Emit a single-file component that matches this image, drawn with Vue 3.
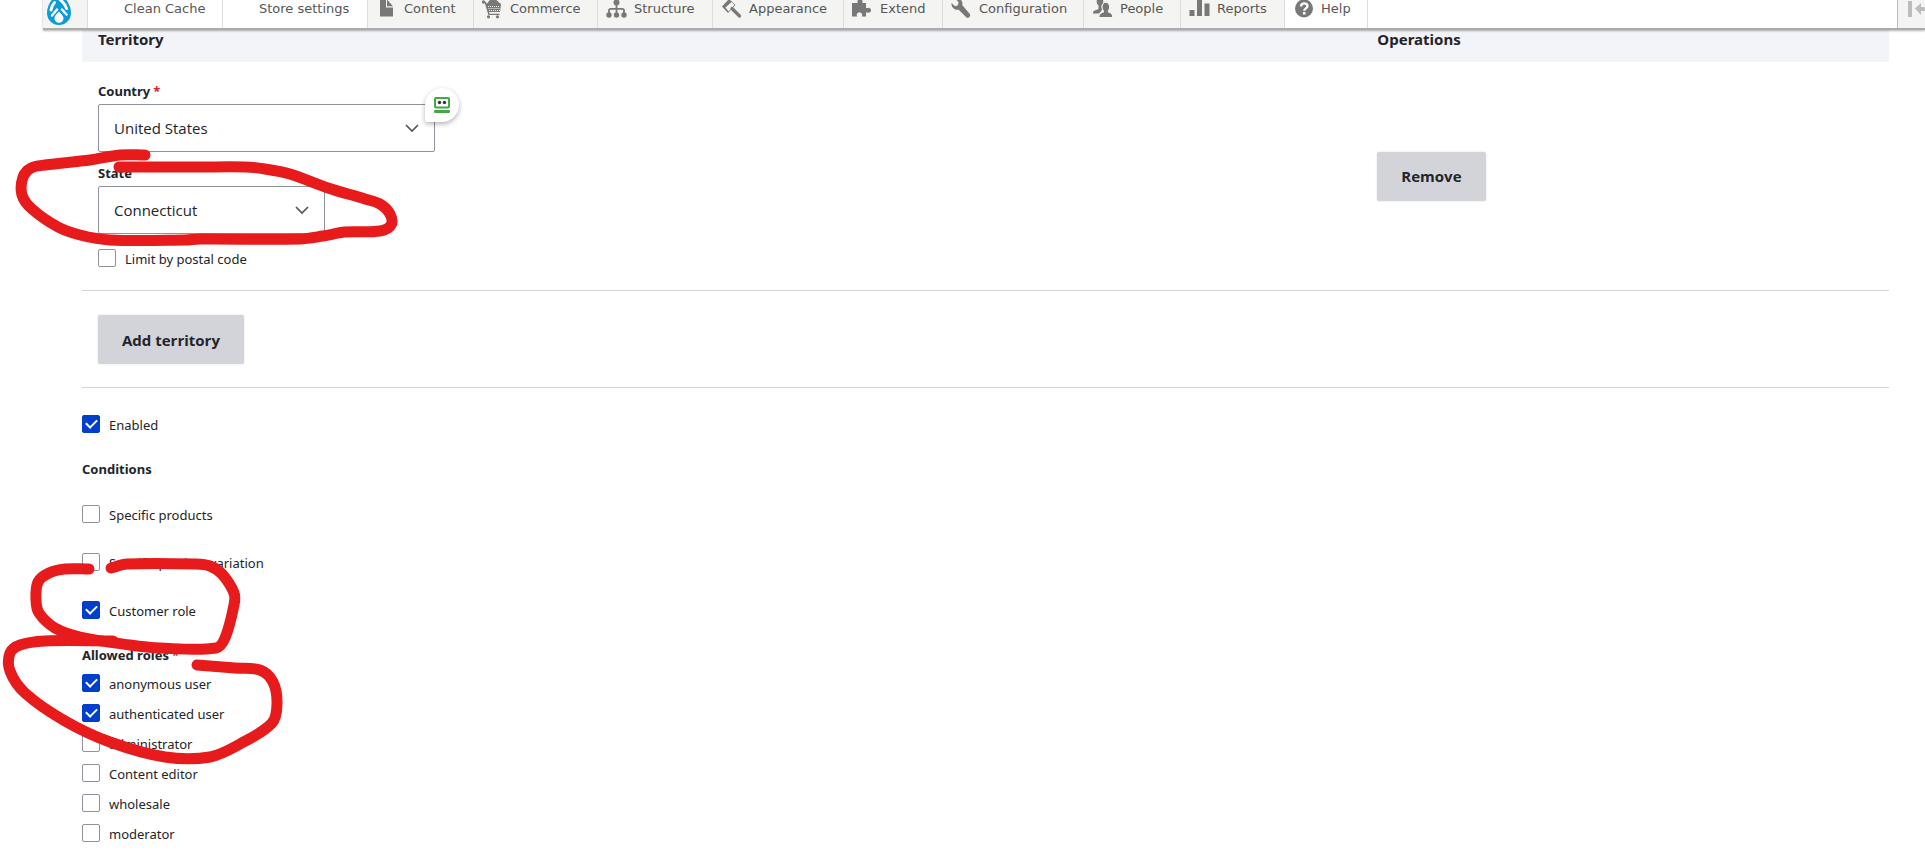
<script setup>
import { ref } from 'vue'

const country = ref('United States')
const state = ref('Connecticut')
const limitPostal = ref(false)
const enabled = ref(true)

const menu = [
  { label: 'Clean Cache', icon: '', plain: true },
  { label: 'Store settings', icon: '', plain: true },
  { label: 'Content', icon: 'content' },
  { label: 'Commerce', icon: 'commerce' },
  { label: 'Structure', icon: 'structure' },
  { label: 'Appearance', icon: 'appearance' },
  { label: 'Extend', icon: 'extend' },
  { label: 'Configuration', icon: 'config' },
  { label: 'People', icon: 'people' },
  { label: 'Reports', icon: 'reports' },
  { label: 'Help', icon: 'help', plain: true },
]

const conditions = ref([
  { id: 'products', label: 'Specific products', checked: false },
  { id: 'variation', label: 'Specific product variation', checked: false },
  { id: 'customer-role', label: 'Customer role', checked: true },
])

const roles = ref([
  { id: 'anonymous', label: 'anonymous user', checked: true },
  { id: 'authenticated', label: 'authenticated user', checked: true },
  { id: 'administrator', label: 'administrator', checked: false },
  { id: 'editor', label: 'Content editor', checked: false },
  { id: 'wholesale', label: 'wholesale', checked: false },
  { id: 'moderator', label: 'moderator', checked: false },
])

// Freehand marker strokes, smoothed with a Catmull-Rom spline.
const strokes = [
  [[145, 155], [120, 155], [90, 160], [45, 165], [31, 168], [23, 177], [22, 195], [32, 209], [58, 227], [80, 235], [110, 240], [185, 240], [200, 239], [300, 239], [323, 236], [345, 232], [380, 231], [391, 225], [390, 214], [380, 204], [365, 199], [328, 188], [290, 174], [265, 169], [245, 167], [200, 167], [119, 167]],
  [[89, 569], [65, 569], [49, 573], [38, 582], [36, 600], [39, 613], [55, 628], [80, 637], [130, 645], [160, 648], [216, 648], [225, 638], [234, 605], [234, 593], [222, 574], [210, 566], [196, 564], [127, 564], [111, 568]],
  [[113, 641], [45, 641], [20, 645], [10, 653], [10, 671], [25, 693], [65, 721], [110, 742], [165, 757], [210, 757], [240, 744], [272, 723], [277, 704], [273, 682], [260, 670], [235, 668], [197, 665]],
]

function spline(p) {
  let d = `M${p[0][0]} ${p[0][1]}`
  for (let i = 0; i < p.length - 1; i++) {
    const a = p[i - 1] || p[i]
    const b = p[i]
    const c = p[i + 1]
    const e = p[i + 2] || c
    const len = Math.hypot(c[0] - b[0], c[1] - b[1])
    const l1 = Math.hypot(c[0] - a[0], c[1] - a[1])
    const l2 = Math.hypot(e[0] - b[0], e[1] - b[1])
    const k1 = len / (3 * l1)
    const k2 = len / (3 * l2)
    d += `C${b[0] + (c[0] - a[0]) * k1} ${b[1] + (c[1] - a[1]) * k1} ${c[0] - (e[0] - b[0]) * k2} ${c[1] - (e[1] - b[1]) * k2} ${c[0]} ${c[1]}`
  }
  return d
}
</script>

<template>
  <div class="page">
    <nav class="toolbar" aria-label="Administration">
      <a href="#" class="home" aria-label="Home">
        <svg width="26" height="36" viewBox="0 0 26 36">
          <path d="M13 1C10 6 1 12 1 23a12 12 0 0 0 24 0C25 12 16 6 13 1z" fill="#0c9ad8" />
          <g fill="none" stroke="#fff" stroke-linecap="round" stroke-width="3">
            <path d="M8.500 12.500C6.500 14.500 5.300 17 5 20" />
            <path d="M14 9.500c3 2.500 5.500 5 6.500 9" />
            <path d="M6 25.500l5-6" stroke-width="2.500" />
            <path d="M16 19.500l4.500 5" stroke-width="2.500" />
          </g>
          <path d="M13 21.500c-1.500 2-4.500 4-4.500 6.800a4.500 4.500 0 0 0 9 0c0-2.800-3-4.800-4.500-6.800z" fill="#fff" />
        </svg>
      </a>
      <a v-for="item in menu" :key="item.label" href="#" class="item" :class="{ plain: item.plain }">
        <span class="icon">
          <svg v-if="item.icon" width="20" height="20" viewBox="0 0 20 20" fill="#787878">
            <path v-if="item.icon === 'content'" d="M4 1h6v8.500h7v9H4zM11 1.500l6 6.800h-6z" />
            <g v-else-if="item.icon === 'commerce'">
              <path d="M3.500 6C5 5.500 6 5 6.500 3.500 8 1.500 9.500 1 11.500 1S16 3 17 4.500l2 1.500L18 14H6.500z" />
              <path d="M1 3.800l2.500 1L7 16.200h10.500" fill="none" stroke="#787878" stroke-width="1.500" />
              <circle cx="1.500" cy="4" r="1.700" />
              <circle cx="6.500" cy="18.800" r="1.600" />
              <circle cx="15.500" cy="18.800" r="1.600" />
              <path d="M6 8.500h12M6.500 10.500h11.500M7 12.500h11" stroke="#f4f4f2" stroke-dasharray="1 1" />
              <path d="M7.500 15h10.500" stroke="#f4f4f2" />
            </g>
            <g v-else-if="item.icon === 'structure'">
              <circle cx="10.500" cy="4.500" r="3" />
              <circle cx="3" cy="17" r="2.700" />
              <circle cx="10.500" cy="17" r="2.700" />
              <circle cx="18" cy="17" r="2.700" />
              <path d="M10.500 5v11M3 16v-3.500q0-1.700 1.700-1.700h11.600q1.700 0 1.700 1.700V16" fill="none" stroke="#787878" stroke-width="1.800" />
            </g>
            <g v-else-if="item.icon === 'appearance'">
              <path d="M1 8.500L8 1l6.500 6-7.500 8z" />
              <path d="M4.500 9.500L10.500 4l3 3-6 6.500z" fill="#f4f4f2" />
              <path d="M11 10.500l7.500 7.500" stroke="#787878" stroke-width="3.200" stroke-linecap="round" />
            </g>
            <path v-else-if="item.icon === 'extend'" d="M0 5h5.500V3.500a2.500 2.500 0 1 1 5 0V5H14v5h1.500a2.500 2.500 0 1 1 0 4.500H14v4H9.700a2.700 2.700 0 1 0-4.500 0H0z" />
            <path v-else-if="item.icon === 'config'" d="M.5 5L4 8.200l3-1L7.500 4 4.300.8C7 0 10 1 11 3.500c.6 1.500.5 2.500.2 3.500l7.200 8.500a2.300 2.300 0 0 1-3.400 3.400L7.500 11.600C4 12.500.2 10 .5 5z" />
            <g v-else-if="item.icon === 'people'">
              <ellipse cx="8" cy="3.500" rx="3.300" ry="4" />
              <path d="M1 15.500c0-3 1.500-2.800 4-3.800l1.500-.7V7h3l.5 5-3 3.500z" />
              <ellipse cx="13.800" cy="9" rx="3.800" ry="4.700" stroke="#f4f4f2" />
              <path d="M12 12h3.800v2.300c1.600 1 4.400.8 4.400 4.700H7.500c0-3.900 3-3.700 4.500-4.700z" />
            </g>
            <path v-else-if="item.icon === 'reports'" d="M.5 12h5v6h-5zM8 0h5v18H8zM15.500 5.500h5V18h-5z" />
            <g v-else>
              <circle cx="11" cy="10.500" r="9" />
              <path d="M8 8.500c0-4 6.500-4 6.500-.5 0 2.500-3.200 2.300-3.200 4.800" fill="none" stroke="#fff" stroke-width="2.300" />
              <rect x="10" y="14" width="2.500" height="2.500" fill="#fff" />
            </g>
          </svg>
        </span>
        {{ item.label }}
      </a>
      <button type="button" class="collapse" aria-label="Vertical orientation">
        <svg width="18" height="20" viewBox="0 0 18 20" fill="#bcbcbc">
          <path d="M0 3h4v16H0zM7 10.500L13 5v4h5v4h-5v4z" />
        </svg>
      </button>
    </nav>

    <main class="content">
      <table class="territories">
        <thead>
          <tr>
            <th class="col-territory">Territory</th>
            <th>Operations</th>
          </tr>
        </thead>
        <tbody>
          <tr>
            <td class="fields">
              <label class="label" for="country">Country<span class="required">*</span></label>
              <div class="select country">
                <select id="country" v-model="country">
                  <option>United States</option>
                </select>
                <svg class="chevron" width="14" height="9" viewBox="0 0 14 9" fill="none" stroke="#55565b" stroke-width="1.700"><path d="M1 1l6 6 6-6" /></svg>
                <span class="badge">
                  <svg width="16" height="16" viewBox="0 0 16 16">
                    <rect x="1" y="1" width="14" height="9.500" rx="1" fill="#fff" stroke="#43a845" stroke-width="2" />
                    <circle cx="5.500" cy="5.500" r="1.700" fill="#333347" />
                    <circle cx="10.500" cy="5.500" r="1.700" fill="#333347" />
                    <rect y="13" width="16" height="3" rx="1" fill="#43a845" />
                  </svg>
                </span>
              </div>
              <label class="label" for="state">State</label>
              <div class="select state">
                <select id="state" v-model="state">
                  <option>Connecticut</option>
                </select>
                <svg class="chevron" width="14" height="9" viewBox="0 0 14 9" fill="none" stroke="#55565b" stroke-width="1.700"><path d="M1 1l6 6 6-6" /></svg>
              </div>
              <label class="check postal"><input v-model="limitPostal" type="checkbox" /><span>Limit by postal code</span></label>
            </td>
            <td><button type="button" class="button">Remove</button></td>
          </tr>
          <tr>
            <td colspan="2" class="add"><button type="button" class="button">Add territory</button></td>
          </tr>
        </tbody>
      </table>

      <label class="check enabled"><input v-model="enabled" type="checkbox" /><span>Enabled</span></label>

      <fieldset class="conditions">
        <legend>Conditions</legend>
        <label v-for="c in conditions" :key="c.id" class="check"><input v-model="c.checked" type="checkbox" /><span>{{ c.label }}</span></label>
      </fieldset>

      <fieldset class="roles">
        <legend>Allowed roles<span class="required">*</span></legend>
        <label v-for="r in roles" :key="r.id" class="check"><input v-model="r.checked" type="checkbox" /><span>{{ r.label }}</span></label>
      </fieldset>
    </main>

    <svg class="marker" width="420" height="780" viewBox="0 0 420 780" aria-hidden="true">
      <path v-for="(s, i) in strokes" :key="i" :d="spline(s)" />
    </svg>
  </div>
</template>

<style>
body {
  margin: 0;
  background: #fff;
}
</style>

<style scoped>
.page {
  position: relative;
  overflow: hidden;
  color: #232429;
  font-family: "Noto Sans", "Open Sans", sans-serif;
  font-size: 13px;
}
.toolbar {
  position: relative;
  z-index: 1;
  display: grid;
  grid-template-columns: 45px 135px 145px 106px 124px 115px 131px 99px 141px 97px 104px 83px 1fr;
  height: 40px;
  margin: -12px 0 0 43px;
  background: #fff;
  box-shadow: 0 2px 0 #ababab, 0 3px 2px rgba(0, 0, 0, 0.3);
  font-family: "DejaVu Sans", sans-serif;
}
.home,
.item {
  box-sizing: border-box;
  display: flex;
  align-items: center;
  border-right: 1px solid #ddd;
  background: #f4f4f2;
  color: #565656;
  text-decoration: none;
  white-space: nowrap;
}
.home {
  padding-left: 3px;
}
.item {
  gap: 8px;
  padding-left: 8px;
}
.plain {
  background: #fff;
}
.icon {
  width: 20px;
  height: 20px;
}
.icon svg {
  display: block;
  overflow: visible;
}
.collapse {
  justify-self: end;
  width: 28px;
  padding: 0 0 0 10px;
  border: 0;
  border-left: 1px solid #bbb;
  background: #f4f4f4;
  overflow: hidden;
}
.collapse svg {
  display: block;
}
.content {
  padding: 0 36px 18px 82px;
}
.territories {
  width: 100%;
  border-collapse: collapse;
}
th {
  height: 34px;
  padding: 0 16px 12px;
  box-sizing: border-box;
  background: #f3f4f9;
  font-size: 15px;
  line-height: 22px;
  text-align: left;
}
.col-territory {
  width: 70.8%;
}
td {
  padding: 20px 16px;
  border-bottom: 1px solid #d3d4d9;
  vertical-align: middle;
}
.fields {
  padding-bottom: 23px;
}
.add {
  padding: 24px 16px 23px;
}
.label,
legend {
  display: block;
  font-weight: 700;
  line-height: 18px;
}
.label {
  margin-bottom: 4px;
}
.required {
  margin-left: 3px;
  color: #dc2323;
}
.select {
  position: relative;
}
.country {
  width: 337px;
  margin-bottom: 12px;
}
.state {
  width: 227px;
  margin-bottom: 15px;
}
select {
  display: block;
  width: 100%;
  height: 48px;
  padding: 0 40px 0 15px;
  border: 1px solid #8e929c;
  border-radius: 2px;
  background: #fff;
  color: #232429;
  font: 15px "Open Sans", "Noto Sans", sans-serif;
  appearance: none;
}
.chevron {
  position: absolute;
  top: 20px;
  right: 16px;
}
.badge {
  position: absolute;
  top: -16px;
  right: -24px;
  display: grid;
  place-items: center;
  width: 34px;
  height: 34px;
  border-radius: 50% 50% 50% 2px;
  background: #fff;
  box-shadow: 0 2px 5px rgba(0, 0, 0, 0.3);
}
.button {
  height: 49px;
  padding: 0 24px;
  border: 0;
  border-radius: 2px;
  background: #d3d4d9;
  box-shadow: 0 0 2px rgba(0, 0, 0, 0.15);
  color: #232429;
  font: 700 15px "Open Sans", "Noto Sans", sans-serif;
  display: block;
}
.check {
  display: flex;
  gap: 9px;
  width: max-content;
  height: 18px;
  line-height: 20px;
}
.check input {
  flex: none;
  width: 18px;
  height: 18px;
  margin: 0;
  border: 1px solid #8e929c;
  border-radius: 2px;
  background: #fff;
  appearance: none;
}
.check input:checked {
  border-color: #003ecc;
  background: #003ecc;
}
.check input:checked::before {
  content: "";
  display: block;
  width: 9px;
  height: 5px;
  margin: 3px 0 0 3px;
  border: solid #fff;
  border-width: 0 0 2px 2px;
  transform: rotate(-45deg);
}
.enabled {
  margin-top: 27px;
}
fieldset {
  margin: 0;
  padding: 0;
  border: 0;
}
legend {
  padding: 0;
}
.conditions {
  margin-top: 27px;
}
.conditions legend {
  margin-bottom: 27px;
}
.conditions .check + .check {
  margin-top: 30px;
}
.roles {
  margin-top: 27px;
}
.roles legend {
  margin-bottom: 10px;
}
.roles .check + .check {
  margin-top: 12px;
}
.marker {
  position: absolute;
  top: 0;
  left: 0;
  z-index: 2;
  fill: none;
  stroke: #e81b1c;
  stroke-width: 11;
  stroke-linecap: round;
  stroke-linejoin: round;
  pointer-events: none;
}
</style>
